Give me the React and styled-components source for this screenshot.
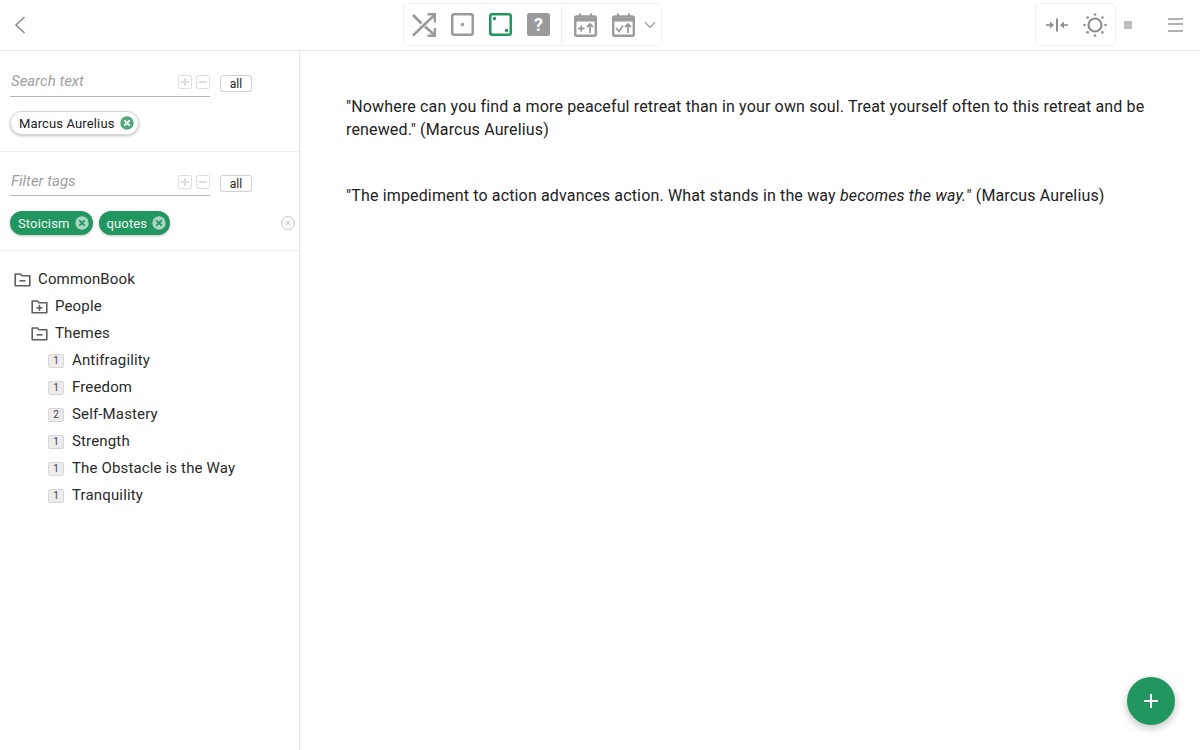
import React from 'react';
import styled, { createGlobalStyle } from 'styled-components';

const GREEN = '#229660';
const ICON = '#9a9a9a';

const GlobalStyle = createGlobalStyle`
  html, body {
    margin: 0;
    padding: 0;
    height: 100%;
    background: #ffffff;
    font-family: Roboto, "Liberation Sans", sans-serif;
    color: #222222;
  }
  * { box-sizing: border-box; }
`;

const BackIcon = () => (
  <svg width="12" height="18" viewBox="0 0 12 18" fill="none" stroke="#8c8c8c" strokeWidth="1.6">
    <path d="M10.5 1 L2 9 L10.5 17" />
  </svg>
);

const ShuffleIcon = () => (
  <svg width="24" height="24" viewBox="0 0 24 24" fill="none" stroke={ICON} strokeWidth="2.6">
    <path d="M1 2 L9.5 10.5" />
    <path d="M13 13.5 L23 22.5" />
    <path d="M1 22.5 L23 1.5" />
    <path d="M15.5 1.3 H23 V9.5" />
    <path d="M23 15 V22.7 H15.5" />
  </svg>
);

const CardIcon = ({ color = ICON, dots }) => (
  <svg width="23" height="23" viewBox="0 0 23 23" fill="none">
    <rect x="1.25" y="1.25" width="20.5" height="20.5" rx="2" stroke={color} strokeWidth="2.5" />
    {dots.map(([x, y]) => (
      <circle key={x} cx={x} cy={y} r="1.7" fill={color} />
    ))}
  </svg>
);

const HelpIcon = () => (
  <svg width="23" height="23" viewBox="0 0 23 23">
    <rect x="0" y="0" width="23" height="23" rx="2.5" fill={ICON} />
    <text x="11.5" y="18" textAnchor="middle" fontSize="18" fontWeight="700" fontFamily="Roboto" fill="#fff">?</text>
  </svg>
);

const CalendarIcon = ({ children }) => (
  <svg width="23" height="24" viewBox="0 0 23 24" fill="none" stroke={ICON}>
    <rect x="1.2" y="3.5" width="20.6" height="19.3" rx="1.5" strokeWidth="2.4" />
    <path d="M1 6.5 H22" strokeWidth="4" />
    <path d="M6 0.5 V4 M17 0.5 V4" strokeWidth="2" />
    {children}
  </svg>
);

const ChevronDown = () => (
  <svg width="12" height="8" viewBox="0 0 12 8" fill="none" stroke="#a0a0a0" strokeWidth="1.2">
    <path d="M1 1 L6 6.5 L11 1" />
  </svg>
);

const CompressIcon = () => (
  <svg width="24" height="14" viewBox="0 0 24 14" fill="none" stroke="#8f8f8f" strokeWidth="1.6">
    <path d="M12 0.5 V13.5" strokeWidth="2" />
    <path d="M1 7 H6" />
    <path d="M23 7 H18" />
    <path d="M5 3.5 L9 7 L5 10.5 Z" fill="#8f8f8f" stroke="none" />
    <path d="M19 3.5 L15 7 L19 10.5 Z" fill="#8f8f8f" stroke="none" />
  </svg>
);

const SunIcon = () => (
  <svg width="24" height="24" viewBox="0 0 24 24" fill="none" stroke="#8f8f8f">
    <circle cx="12" cy="12" r="6.5" strokeWidth="2.2" />
    <g fill="#8f8f8f" stroke="none">
      <circle cx="12" cy="1.5" r="1.3" />
      <circle cx="12" cy="22.5" r="1.3" />
      <circle cx="1.5" cy="12" r="1.3" />
      <circle cx="22.5" cy="12" r="1.3" />
      <circle cx="4.6" cy="4.6" r="1.3" />
      <circle cx="19.4" cy="4.6" r="1.3" />
      <circle cx="4.6" cy="19.4" r="1.3" />
      <circle cx="19.4" cy="19.4" r="1.3" />
    </g>
  </svg>
);

const FolderIcon = ({ open }) => (
  <svg width="17" height="14" viewBox="0 0 17 14" fill="none" stroke="#5f5f5f" strokeWidth="1.6">
    <path d="M1.2 12.8 V1 H6.5 L8 2.8 H15.8 V12.8 Z" strokeLinejoin="round" />
    <path d="M5.5 7.8 H11.5" />
    {!open && <path d="M8.5 4.8 V10.8" />}
  </svg>
);

const CloseDot = ({ bg, fg }) => (
  <svg width="14" height="14" viewBox="0 0 14 14">
    <circle cx="7" cy="7" r="6.7" fill={bg} />
    <path d="M4.3 4.3 L9.7 9.7 M9.7 4.3 L4.3 9.7" stroke={fg} strokeWidth="1.8" />
  </svg>
);

const ClearIcon = () => (
  <svg width="14" height="14" viewBox="0 0 14 14" fill="none" stroke="#bdbdbd" strokeWidth="0.9">
    <circle cx="7" cy="7" r="6.4" />
    <path d="M4.6 4.6 L9.4 9.4 M9.4 4.6 L4.6 9.4" />
  </svg>
);

const Page = styled.div`
  position: relative;
  width: 100%;
  height: 100vh;
  display: flex;
  flex-direction: column;
  overflow: hidden;
`;

const TopBar = styled.header`
  height: 51px;
  flex: none;
  display: grid;
  grid-template-columns: 403px auto 1fr;
  align-items: center;
  border-bottom: 1px solid #e6e6e6;
  padding-bottom: 1px;
`;

const BackButton = styled.div`
  display: flex;
  align-items: center;
  padding-left: 14px;
`;

const ToolGroup = styled.div`
  display: flex;
  align-items: center;
  width: 259px;
  height: 43px;
  padding-left: 8px;
  border: 1px solid #f0f0f0;
  border-radius: 5px;
`;

const ToolIcons = styled.div`
  display: flex;
  align-items: center;
  gap: 15px;
`;

const ToolDivider = styled.div`
  width: 1px;
  height: 36px;
  background: #ececec;
  margin: 0 12px 0 11px;
`;

const ChevronSlot = styled.div`
  display: flex;
  margin-left: 9px;
`;

const RightTools = styled.div`
  display: flex;
  align-items: center;
  justify-content: flex-end;
`;

const SmallGroup = styled.div`
  display: flex;
  align-items: center;
  gap: 14px;
  width: 81px;
  height: 43px;
  padding-left: 9px;
  border: 1px solid #f0f0f0;
  border-radius: 5px;
`;

const Square = styled.div`
  width: 8px;
  height: 8px;
  background: #bdbdbd;
  margin-left: 8px;
`;

const Hamburger = styled.div`
  width: 15px;
  height: 14px;
  margin: 0 17px 0 36px;
  border-top: 2px solid #b0b0b0;
  border-bottom: 2px solid #b0b0b0;
  position: relative;

  &::after {
    content: '';
    position: absolute;
    left: 0;
    right: 0;
    top: 3px;
    height: 2px;
    background: #b0b0b0;
  }
`;

const Body = styled.div`
  flex: 1;
  display: flex;
  min-height: 0;
`;

const Sidebar = styled.aside`
  width: 300px;
  flex: none;
  border-right: 1px solid #e6e6e6;
`;

const FilterBlock = styled.section`
  height: ${(p) => p.$height}px;
  padding: ${(p) => p.$top}px 10px 0;
  border-bottom: 1px solid #eeeeee;
`;

const FilterRow = styled.div`
  display: flex;
  align-items: flex-start;
`;

const SearchField = styled.div`
  position: relative;
  width: 200px;
  height: ${(p) => p.$height}px;
  border-bottom: 1px solid #b5b5b5;
  font-size: 15px;
  font-style: italic;
  color: #a0a0a0;
  line-height: 16px;
  padding: 6px 0 0 1px;
`;

const MiniButtons = styled.div`
  position: absolute;
  right: 0;
  top: 8px;
  display: flex;
  gap: 4px;
`;

const MiniButton = styled.div`
  width: 14px;
  height: 14px;
  border: 1px solid #dedede;
  border-radius: 2px;
  position: relative;

  &::before {
    content: '';
    position: absolute;
    left: 2px;
    right: 2px;
    top: 5px;
    height: 2px;
    background: #dedede;
  }

  &::after {
    content: '';
    display: ${(p) => (p.$plus ? 'block' : 'none')};
    position: absolute;
    top: 2px;
    bottom: 2px;
    left: 5px;
    width: 2px;
    background: #dedede;
  }
`;

const AllButton = styled.div`
  width: 32px;
  height: 17px;
  margin: 8px 0 0 10px;
  border: 1px solid #d0d0d0;
  border-radius: 3px;
  font-size: 12px;
  line-height: 16px;
  text-align: center;
  color: #222;
`;

const ChipRow = styled.div`
  display: flex;
  align-items: center;
  gap: 6px;
  margin-top: ${(p) => p.$top}px;
`;

const Chip = styled.div`
  display: flex;
  align-items: center;
  gap: 5px;
  height: 24px;
  padding: 0 4px 0 8px;
  border-radius: 12px;
  font-size: 13px;
  letter-spacing: 0.13px;
  background: ${(p) => (p.$active ? GREEN : '#fff')};
  color: ${(p) => (p.$active ? '#eefaf3' : '#222')};
  border: ${(p) => (p.$active ? 'none' : '1px solid #d8d8d8')};
  box-shadow: 0 1px 3px rgba(0, 0, 0, 0.25);
`;

const ClearSlot = styled.div`
  display: flex;
  margin-left: auto;
  margin-right: -6px;
`;

const Tree = styled.ul`
  list-style: none;
  margin: 0;
  padding: 15px 0 0 0;
`;

const TreeRow = styled.li`
  display: flex;
  align-items: center;
  height: 27px;
  gap: 7px;
  padding-left: ${(p) => 14 + p.$depth * 17}px;
  font-size: 15px;
  letter-spacing: 0.15px;
  color: #2a2a2a;
`;

const TreeLabel = styled.span`
  padding-bottom: 2px;
`;

const CountBadge = styled.span`
  width: 16px;
  height: 14px;
  border-radius: 2px;
  background: #ececec;
  border: 1px solid #d8d8d8;
  font-size: 10px;
  line-height: 12px;
  letter-spacing: 0;
  text-align: center;
  color: #444;
  margin-right: 1px;
`;

const Content = styled.main`
  flex: 1;
  padding: 44px 46px 0;
  font-size: 16px;
  line-height: 23px;
  letter-spacing: 0.15px;
  color: #222;
`;

const Quote = styled.p`
  margin: 0 0 43px;
`;

const Fab = styled.div`
  position: absolute;
  left: 1127px;
  top: 677px;
  width: 48px;
  height: 48px;
  border-radius: 50%;
  background: ${GREEN};
  box-shadow: 0 3px 8px rgba(0, 0, 0, 0.25);
  display: flex;
  align-items: center;
  justify-content: center;
`;

const treeItems = [
  { kind: 'open', depth: 0, label: 'CommonBook' },
  { kind: 'closed', depth: 1, label: 'People' },
  { kind: 'open', depth: 1, label: 'Themes' },
  { count: 1, depth: 2, label: 'Antifragility' },
  { count: 1, depth: 2, label: 'Freedom' },
  { count: 2, depth: 2, label: 'Self-Mastery' },
  { count: 1, depth: 2, label: 'Strength' },
  { count: 1, depth: 2, label: 'The Obstacle is the Way' },
  { count: 1, depth: 2, label: 'Tranquility' },
];

const App = () => (
  <Page>
    <GlobalStyle />
    <TopBar>
      <BackButton>
        <BackIcon />
      </BackButton>
      <ToolGroup>
        <ToolIcons>
          <ShuffleIcon />
          <CardIcon dots={[[11.5, 11.5]]} />
          <CardIcon color={GREEN} dots={[[5.5, 5.5], [17.5, 17.5]]} />
          <HelpIcon />
        </ToolIcons>
        <ToolDivider />
        <ToolIcons>
          <CalendarIcon>
            <path d="M4 15.5 H10.5 M7.25 12.2 V18.8" strokeWidth="1.8" />
            <path d="M16 20 V11 M13 14 L16 11 L19 14" strokeWidth="1.8" />
          </CalendarIcon>
          <CalendarIcon>
            <path d="M4 15 L7 18.5 L11 12.5" strokeWidth="1.8" />
            <path d="M16 20 V11 M13 14 L16 11 L19 14" strokeWidth="1.8" />
          </CalendarIcon>
        </ToolIcons>
        <ChevronSlot>
          <ChevronDown />
        </ChevronSlot>
      </ToolGroup>
      <RightTools>
        <SmallGroup>
          <CompressIcon />
          <SunIcon />
        </SmallGroup>
        <Square />
        <Hamburger />
      </RightTools>
    </TopBar>
    <Body>
      <Sidebar>
        <FilterBlock $height={101} $top={16}>
          <FilterRow>
            <SearchField $height={30}>
              Search text
              <MiniButtons>
                <MiniButton $plus />
                <MiniButton />
              </MiniButtons>
            </SearchField>
            <AllButton>all</AllButton>
          </FilterRow>
          <ChipRow $top={14}>
            <Chip>
              Marcus Aurelius
              <CloseDot bg="#52a87c" fg="#fff" />
            </Chip>
          </ChipRow>
        </FilterBlock>
        <FilterBlock $height={99} $top={15}>
          <FilterRow>
            <SearchField $height={29}>
              Filter tags
              <MiniButtons>
                <MiniButton $plus />
                <MiniButton />
              </MiniButtons>
            </SearchField>
            <AllButton>all</AllButton>
          </FilterRow>
          <ChipRow $top={15}>
            <Chip $active>
              Stoicism
              <CloseDot bg="#a8d5be" fg={GREEN} />
            </Chip>
            <Chip $active>
              quotes
              <CloseDot bg="#a8d5be" fg={GREEN} />
            </Chip>
            <ClearSlot>
              <ClearIcon />
            </ClearSlot>
          </ChipRow>
        </FilterBlock>
        <Tree>
          {treeItems.map((item) => (
            <TreeRow key={item.label} $depth={item.depth}>
              {item.kind ? <FolderIcon open={item.kind === 'open'} /> : <CountBadge>{item.count}</CountBadge>}
              <TreeLabel>{item.label}</TreeLabel>
            </TreeRow>
          ))}
        </Tree>
      </Sidebar>
      <Content>
        <Quote>
          "Nowhere can you find a more peaceful retreat than in your own soul. Treat yourself often to this retreat and be renewed." (Marcus Aurelius)
        </Quote>
        <Quote>
          "The impediment to action advances action. What stands in the way <em>becomes the way.</em>" (Marcus Aurelius)
        </Quote>
      </Content>
    </Body>
    <Fab>
      <svg width="14" height="14" viewBox="0 0 14 14" stroke="#fff" strokeWidth="2">
        <path d="M7 0 V14 M0 7 H14" />
      </svg>
    </Fab>
  </Page>
);

export default App;
